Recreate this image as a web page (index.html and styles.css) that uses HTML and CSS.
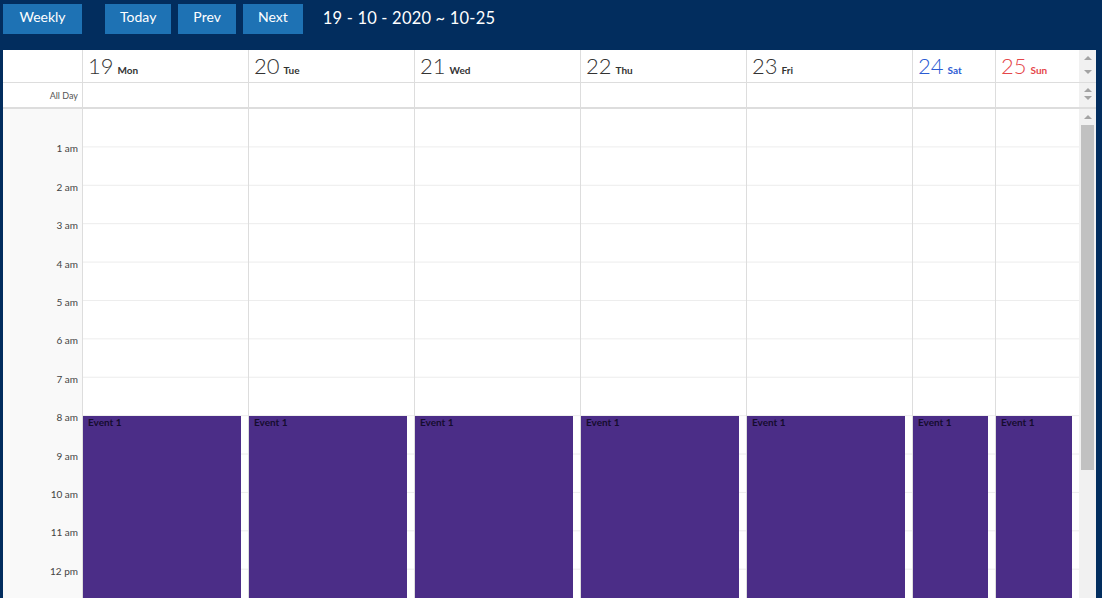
FILE: index.html
```html
<!DOCTYPE html>
<html>
<head>
<meta charset="utf-8">
<link rel="stylesheet" href="styles.css">
</head>
<body>
<div class="toolbar">
  <button class="btn btn-weekly">Weekly</button>
  <button class="btn">Today</button>
  <button class="btn">Prev</button>
  <button class="btn">Next</button>
  <span class="title">19 - 10 - 2020 ~ 10-25</span>
</div>
<div class="panel">
  <div class="row head">
    <div class="gutter"></div>
    <div class="day"><span class="num">19</span><span class="dow">Mon</span></div>
    <div class="day"><span class="num">20</span><span class="dow">Tue</span></div>
    <div class="day"><span class="num">21</span><span class="dow">Wed</span></div>
    <div class="day"><span class="num">22</span><span class="dow">Thu</span></div>
    <div class="day"><span class="num">23</span><span class="dow">Fri</span></div>
    <div class="day sat"><span class="num">24</span><span class="dow">Sat</span></div>
    <div class="day sun"><span class="num">25</span><span class="dow">Sun</span></div>
    <div class="sb"><i class="up"></i><i class="down"></i></div>
  </div>
  <div class="row allday">
    <div class="gutter">All Day</div>
    <div class="day"></div><div class="day"></div><div class="day"></div><div class="day"></div><div class="day"></div><div class="day"></div><div class="day"></div>
    <div class="sb sb-small"><i class="up"></i><i class="down"></i></div>
  </div>
  <div class="row body">
    <div class="gutter times">
      <div class="spacer"></div>
      <div class="t">1 am</div><div class="t">2 am</div><div class="t">3 am</div><div class="t">4 am</div>
      <div class="t">5 am</div><div class="t">6 am</div><div class="t">7 am</div><div class="t">8 am</div>
      <div class="t">9 am</div><div class="t">10 am</div><div class="t">11 am</div><div class="t">12 pm</div>
    </div>
    <div class="col"><div class="slots"></div><div class="event">Event 1</div></div>
    <div class="col"><div class="slots"></div><div class="event">Event 1</div></div>
    <div class="col"><div class="slots"></div><div class="event">Event 1</div></div>
    <div class="col"><div class="slots"></div><div class="event">Event 1</div></div>
    <div class="col"><div class="slots"></div><div class="event">Event 1</div></div>
    <div class="col"><div class="slots"></div><div class="event">Event 1</div></div>
    <div class="col"><div class="slots"></div><div class="event">Event 1</div></div>
    <div class="sb sb-body"><i class="up"></i><div class="thumb"></div></div>
  </div>
</div>
</body>
</html>
```

FILE: styles.css
```css
* { box-sizing: border-box; }
html, body { margin: 0; padding: 0; height: 100%; }
body {
  background: #022d5e;
  font-family: Lato, "Noto Sans", sans-serif;
  overflow: hidden;
}
.toolbar {
  height: 50px;
  display: flex;
  align-items: flex-start;
  padding: 4px 0 0 3px;
}
.btn {
  height: 30px;
  border: none;
  background: #1e72b4;
  color: #fff;
  font-family: Lato, "Noto Sans", sans-serif;
  font-size: 14px;
  line-height: 26px;
  padding: 0 15px 4px;
  margin-right: 7px;
  cursor: pointer;
}
.btn-weekly { width: 79px; margin-right: 23px; }
.title {
  color: #fff;
  font-size: 16.5px;
  line-height: 28px;
  margin-left: 13px;
  letter-spacing: 0.2px;
}
.panel {
  margin: 0 6px 0 3px;
  background: #fff;
  height: calc(100vh - 50px);
  display: flex;
  flex-direction: column;
  overflow: hidden;
}
.row {
  display: grid;
  grid-template-columns: 80px 166px 166px 166px 166px 166px 83px 83px 17px;
}
.head { height: 33px; border-bottom: 1px solid #ddd; }
.allday { height: 26px; border-bottom: 2px solid #ddd; }
.gutter { border-right: 1px solid #ddd; }
.allday .gutter {
  font-size: 9px;
  color: #555;
  text-align: right;
  padding: 7px 4px 0 0;
}
.day { border-right: 1px solid #ddd; }
.head .day {
  padding: 2px 0 0 5px;
  color: #333;
  white-space: nowrap;
}
.num { font-size: 22px; font-weight: 300; }
.dow { font-size: 10px; font-weight: 700; margin-left: 4px; }
.sat { color: #2b5bd3 !important; }
.sun { color: #e5464a !important; }
.day.sun { border-right: none; }
.allday .day:nth-child(8) { border-right: none; }
.sb {
  background: #f1f1f1;
  display: flex;
  flex-direction: column;
  align-items: center;
  padding-top: 6px;
  gap: 10px;
}
.sb-small { padding-top: 5px; gap: 4px; }
.sb .up, .sb .down {
  width: 0; height: 0;
  border-left: 4px solid transparent;
  border-right: 4px solid transparent;
}
.sb .up { border-bottom: 4px solid #a3a3a3; }
.sb .down { border-top: 4px solid #a3a3a3; }
.body { flex: 1; min-height: 0; overflow: hidden; }
.times { background: #f9f9f9; }
.spacer { height: 33.4px; }
.t {
  height: 38.4px;
  line-height: 12px;
  font-size: 10px;
  color: #444;
  text-align: right;
  padding-right: 4px;
}
.col {
  position: relative;
  border-right: 1px solid #ddd;
}
.col:nth-child(8) { border-right: none; }
.slots {
  height: 100%;
  background-image: linear-gradient(to bottom, transparent 37.4px, #ececec 37.4px, #ececec 38.4px);
  background-size: 100% 38.4px;
}
.event {
  position: absolute;
  top: 307.2px;
  left: 0;
  right: 7px;
  height: 400px;
  background: #4b2d87;
  color: #150c2e;
  font-size: 10px;
  font-weight: 700;
  padding: 0 5px;
}
.sb-body { padding-top: 6px; gap: 0; }
.sb-body .up { margin-bottom: 6px; }
.thumb {
  width: 13px;
  height: 345px;
  background: #c1c1c1;
}
```
